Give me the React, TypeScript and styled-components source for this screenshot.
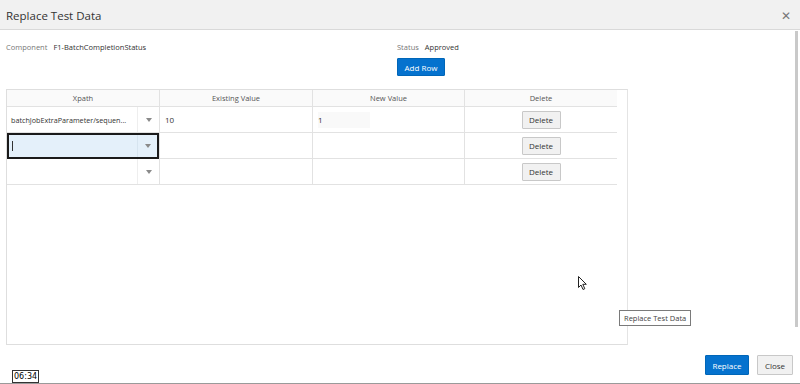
import React from 'react';
import styled, { createGlobalStyle } from 'styled-components';

const GlobalStyle = createGlobalStyle`
  html, body { margin: 0; padding: 0; background: #fff; }
  body { font-family: "Open Sans", "Liberation Sans", Arial, sans-serif; color: #333; }
`;

const Dialog = styled.div`
  position: relative;
  width: 800px;
  height: 384px;
  display: flex;
  flex-direction: column;
  background: #fff;
  border-bottom: 1px solid #9a9a9a;
  box-sizing: border-box;
  overflow: hidden;
`;

const Header = styled.div`
  height: 29px;
  flex: none;
  display: flex;
  align-items: center;
  justify-content: space-between;
  padding: 0 9px 0 6px;
  background: #f1f1f1;
  border-bottom: 1px solid #d9d9d9;
`;

const Title = styled.div`
  font-size: 11.5px;
  color: #333;
  padding-top: 1px;
`;

const CloseX = styled.span`
  font-size: 12px;
  color: #777;
  line-height: 1;
  padding-top: 2px;
`;

const Body = styled.div`
  flex: 1;
  display: flex;
  min-height: 0;
`;

const Content = styled.div`
  flex: 1;
  display: flex;
  flex-direction: column;
  padding: 10px 0 0 6px;
`;

const Scrollbar = styled.div`
  width: 3px;
  margin: 1px 2px 26px 0;
  background: #c9c9c9;
`;

const Meta = styled.div`
  display: grid;
  grid-template-columns: 391px auto;
  font-size: 7.5px;
  height: 14px;
  align-items: center;
`;

const MetaItem = styled.div`
  display: flex;
  gap: 6px;
`;

const MetaLabel = styled.span`
  color: #777;
`;

const MetaValue = styled.span`
  color: #333;
`;

const AddRowWrap = styled.div`
  display: flex;
  padding-left: 391px;
  margin-top: 4px;
`;

const PrimaryButton = styled.button<{ $w: number; $h: number }>`
  width: ${(p) => p.$w}px;
  height: ${(p) => p.$h}px;
  padding: 0;
  border: 1px solid #0066b8;
  border-radius: 1px;
  background: #0572ce;
  color: #fff;
  font-family: inherit;
  font-size: 8px;
`;

const SecondaryButton = styled.button<{ $w: number; $h: number }>`
  width: ${(p) => p.$w}px;
  height: ${(p) => p.$h}px;
  padding: 0;
  border: 1px solid #c8c8c8;
  border-radius: 1px;
  background: #f1f1f1;
  color: #333;
  font-family: inherit;
  font-size: 8px;
`;

const Panel = styled.div`
  margin-top: 13px;
  width: 622px;
  height: 256px;
  box-sizing: border-box;
  border: 1px solid #dedede;
  border-right-color: #e4e4e4;
`;

const Table = styled.div`
  width: 610px;
  display: grid;
  grid-template-columns: 152px 153px 152px 153px;
`;

const HeadCell = styled.div`
  height: 17px;
  display: flex;
  align-items: center;
  justify-content: center;
  font-size: 7.5px;
  color: #555;
  background: #fafafa;
  border-bottom: 1px solid #e2e2e2;
  border-left: 1px solid #e2e2e2;
  box-sizing: border-box;
  &:first-child { border-left: none; }
`;

const Cell = styled.div`
  height: 26px;
  display: flex;
  align-items: center;
  box-sizing: border-box;
  border-bottom: 1px solid #e2e2e2;
  border-left: 1px solid #e2e2e2;
  font-size: 8px;
  color: #333;
  padding-left: 5px;
`;

const SelectCell = styled.div<{ $active?: boolean }>`
  height: 26px;
  min-width: 0;
  display: flex;
  align-items: stretch;
  box-sizing: border-box;
  border-bottom: 1px solid #e2e2e2;
  ${(p) => p.$active && 'border: 2px solid #1a1a1a;'}
  background: ${(p) => (p.$active ? '#e4f0fa' : 'transparent')};
  font-size: 7.2px;
  color: #333;
`;

const SelectText = styled.div<{ $active?: boolean }>`
  flex: 1;
  min-width: 0;
  display: flex;
  align-items: center;
  white-space: nowrap;
  padding-left: ${(p) => (p.$active ? '3px' : '4px')};
`;

const Caret = styled.div<{ $active?: boolean }>`
  width: ${(p) => (p.$active ? '19px' : '21px')};
  flex: none;
  display: flex;
  align-items: center;
  justify-content: center;
  border-left: 1px solid ${(p) => (p.$active ? '#d6e4ef' : '#eeeeee')};
  &::after {
    content: '';
    border-left: 3px solid transparent;
    border-right: 3px solid transparent;
    border-top: 4px solid #8a8a8a;
  }
`;

const TextCaret = styled.span`
  width: 1px;
  height: 10px;
  background: #333;
`;

const ValueBox = styled.div`
  width: 52px;
  height: 16px;
  display: flex;
  align-items: center;
  background: #f9f9f9;
`;

const DeleteCell = styled(Cell)`
  justify-content: center;
  padding-left: 0;
`;

const Footer = styled.div`
  height: 30px;
  flex: none;
  display: flex;
  justify-content: flex-end;
  align-items: flex-start;
  gap: 8px;
  padding: 2px 7px 0 0;
  box-sizing: border-box;
`;

const Tooltip = styled.div`
  position: absolute;
  left: 619px;
  top: 310px;
  padding: 2px 4px;
  font-size: 7.5px;
  color: #444;
  background: #fff;
  border: 1px solid #7a7a7a;
  white-space: nowrap;
`;

const Clock = styled.div`
  position: absolute;
  left: 12px;
  top: 370px;
  padding: 0 1px;
  font-family: "DejaVu Sans", sans-serif;
  font-size: 8px;
  line-height: 11px;
  color: #000;
  background: #fff;
  border: 1px solid #333;
`;

const Pointer = styled.svg`
  position: absolute;
  left: 578px;
  top: 276px;
`;

type Row = { xpath: string; existing: string; newValue: string; active?: boolean };

const rows: Row[] = [
  { xpath: 'batchJobExtraParameter/sequen...', existing: '10', newValue: '1' },
  { xpath: '', existing: '', newValue: '', active: true },
  { xpath: '', existing: '', newValue: '' },
];

export default function App() {
  return (
    <>
      <GlobalStyle />
      <Dialog>
        <Header>
          <Title>Replace Test Data</Title>
          <CloseX>✕</CloseX>
        </Header>
        <Body>
          <Content>
            <Meta>
              <MetaItem>
                <MetaLabel>Component</MetaLabel>
                <MetaValue>F1-BatchCompletionStatus</MetaValue>
              </MetaItem>
              <MetaItem>
                <MetaLabel>Status</MetaLabel>
                <MetaValue>Approved</MetaValue>
              </MetaItem>
            </Meta>
            <AddRowWrap>
              <PrimaryButton $w={48} $h={18}>Add Row</PrimaryButton>
            </AddRowWrap>
            <Panel>
              <Table>
                <HeadCell>Xpath</HeadCell>
                <HeadCell>Existing Value</HeadCell>
                <HeadCell>New Value</HeadCell>
                <HeadCell>Delete</HeadCell>
                {rows.map((r, i) => (
                  <React.Fragment key={i}>
                    <SelectCell $active={r.active}>
                      <SelectText $active={r.active}>
                        {r.active ? <TextCaret /> : r.xpath}
                      </SelectText>
                      <Caret $active={r.active} />
                    </SelectCell>
                    <Cell>{r.existing}</Cell>
                    <Cell>{r.newValue && <ValueBox>{r.newValue}</ValueBox>}</Cell>
                    <DeleteCell>
                      <SecondaryButton $w={39} $h={18}>Delete</SecondaryButton>
                    </DeleteCell>
                  </React.Fragment>
                ))}
              </Table>
            </Panel>
          </Content>
          <Scrollbar />
        </Body>
        <Footer>
          <PrimaryButton $w={44} $h={20}>Replace</PrimaryButton>
          <SecondaryButton $w={36} $h={20}>Close</SecondaryButton>
        </Footer>
        <Tooltip>Replace Test Data</Tooltip>
        <Clock>06:34</Clock>
        <Pointer width="10" height="15" viewBox="0 0 10 15">
          <path d="M0.5 0.5 L0.5 11.5 L3 9 L5 13.5 L6.8 12.7 L4.8 8.3 L8.3 8.3 Z" fill="#fff" stroke="#222" strokeWidth="1" strokeLinejoin="round" />
        </Pointer>
      </Dialog>
    </>
  );
}
